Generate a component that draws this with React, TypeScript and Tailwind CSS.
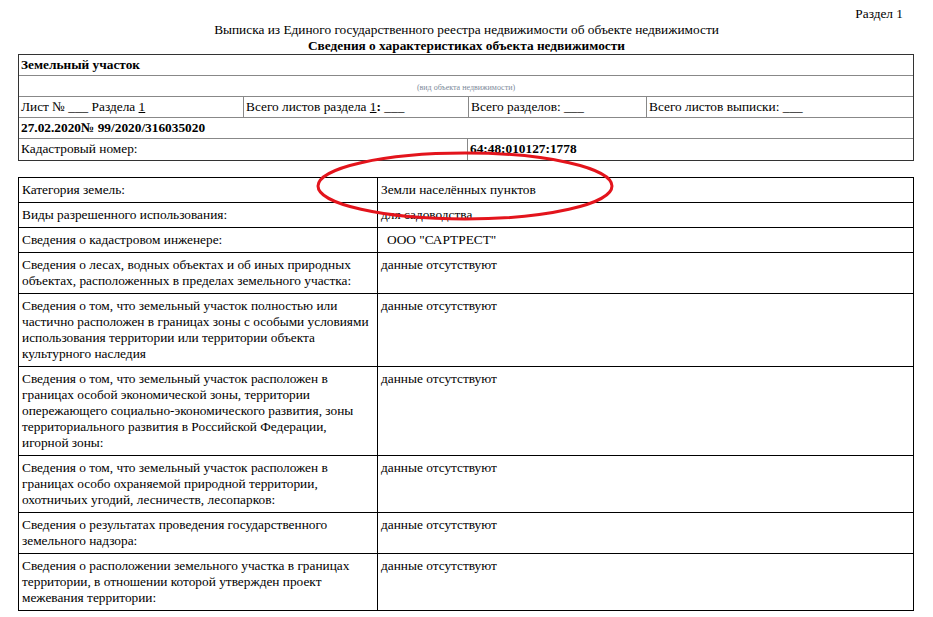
import React from "react";

const rows = [
  { label: ["Категория земель:"], value: "Земли населённых пунктов" },
  { label: ["Виды разрешенного использования:"], value: "для садоводства" },
  { label: ["Сведения о кадастровом инженере:"], value: "ООО \"САРТРЕСТ\"", indent: true },
  {
    label: [
      "Сведения о лесах, водных объектах и об иных природных",
      "объектах, расположенных в пределах земельного участка:",
    ],
    value: "данные отсутствуют",
  },
  {
    label: [
      "Сведения о том, что земельный участок полностью или",
      "частично расположен в границах зоны с особыми условиями",
      "использования территории или территории объекта",
      "культурного наследия",
    ],
    value: "данные отсутствуют",
  },
  {
    label: [
      "Сведения о том, что земельный участок расположен в",
      "границах особой экономической зоны, территории",
      "опережающего социально-экономического развития, зоны",
      "территориального развития в Российской Федерации,",
      "игорной зоны:",
    ],
    value: "данные отсутствуют",
  },
  {
    label: [
      "Сведения о том, что земельный участок расположен в",
      "границах особо охраняемой природной территории,",
      "охотничьих угодий, лесничеств, лесопарков:",
    ],
    value: "данные отсутствуют",
  },
  {
    label: ["Сведения о результатах проведения государственного", "земельного надзора:"],
    value: "данные отсутствуют",
  },
  {
    label: [
      "Сведения о расположении земельного участка в границах",
      "территории, в отношении которой утвержден проект",
      "межевания территории:",
    ],
    value: "данные отсутствуют",
  },
];

const App = () => {
  return (
    <div className="relative w-[933px] h-[617px] bg-white text-black text-[13.33px] leading-4 font-[family-name:Liberation_Serif,Times_New_Roman,serif] overflow-hidden">
      {/* header */}
      <div className="pt-[6px] pr-[30px] text-right">Раздел 1</div>
      <div className="text-center">
        Выписка из Единого государственного реестра недвижимости об объекте недвижимости
      </div>
      <div className="text-center font-bold">Сведения о характеристиках объекта недвижимости</div>

      {/* top table */}
      <div className="ml-[18px] w-[896px] border border-[#333] divide-y divide-[#888]">
        <div className="h-[21px] pl-[2px] pt-[2px] font-bold">Земельный участок</div>
        <div className="h-[21px] pt-[8px] text-center text-[8px] leading-[8px] text-[#7d8a9a]">
          (вид объекта недвижимости)
        </div>
        <div className="h-[21px] flex">
          <div className="w-[224px] pl-[2px] pt-[2px]">
            Лист № ___ Раздела <span className="underline">1</span>
          </div>
          <div className="w-[225px] border-l border-[#888] pl-[2px] pt-[2px]">
            Всего листов раздела <span className="underline">1</span>
            <b>:</b> ___
          </div>
          <div className="w-[178px] border-l border-[#888] pl-[2px] pt-[2px]">Всего разделов: ___</div>
          <div className="flex-1 border-l border-[#888] pl-[2px] pt-[2px]">Всего листов выписки: ___</div>
        </div>
        <div className="h-[21px] pl-[2px] pt-[2px] font-bold">27.02.2020№ 99/2020/316035020</div>
        <div className="h-[21px] flex">
          <div className="w-[448px] pl-[2px] pt-[2px]">Кадастровый номер:</div>
          <div className="flex-1 border-l border-[#888] pl-[2px] pt-[2px] font-bold">64:48:010127:1778</div>
        </div>
      </div>

      {/* characteristics table */}
      <div className="mt-[16px] ml-[18px] w-[896px] border border-black divide-y divide-black">
        {rows.map((r, i) => (
          <div key={i} className="flex">
            <div className="w-[358px] px-[3px] py-[4px] whitespace-nowrap">
              {r.label.map((l, j) => (
                <div key={j}>{l}</div>
              ))}
            </div>
            <div className={"flex-1 border-l border-black py-[4px] " + (r.indent ? "pl-[9px]" : "pl-[3px]")}>
              {r.value}
            </div>
          </div>
        ))}
      </div>

      {/* hand drawn mark */}
      <svg className="absolute left-0 top-0 pointer-events-none" width="933" height="617">
        <ellipse cx="465" cy="186" rx="147" ry="33" fill="none" stroke="#e3141c" strokeWidth="3" />
      </svg>
    </div>
  );
};

export default App;
